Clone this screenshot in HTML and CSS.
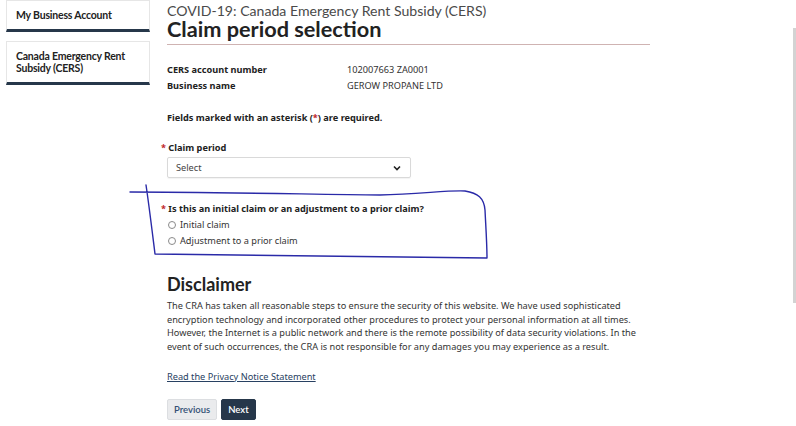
FILE: index.html
```html
<!DOCTYPE html>
<html lang="en">
<head>
<meta charset="utf-8">
<title>Claim period selection</title>
<link rel="stylesheet" href="styles.css">
</head>
<body>
<div class="page">
  <nav class="sidebar">
    <a class="side-item first" href="#">My Business Account</a>
    <a class="side-item" href="#">Canada Emergency Rent Subsidy (CERS)</a>
  </nav>
  <main class="main">
    <header class="head">
      <div class="kicker">COVID-19: Canada Emergency Rent Subsidy (CERS)</div>
      <h1 class="title">Claim period selection</h1>
    </header>
    <dl class="info">
      <dt>CERS account number</dt><dd>102007663 ZA0001</dd>
      <dt>Business name</dt><dd>GEROW PROPANE LTD</dd>
    </dl>
    <p class="req-note">Fields marked with an asterisk (<span class="ast">*</span>) are required.</p>
    <div class="field">
      <label class="label"><span class="ast">*</span> Claim period</label>
      <div class="select"><span>Select</span>
        <svg width="8" height="6" viewBox="0 0 8 6"><path d="M1 1.5 L4 4.5 L7 1.5" fill="none" stroke="#222" stroke-width="1.6"/></svg>
      </div>
    </div>
    <fieldset class="question">
      <legend class="label"><span class="ast">*</span> Is this an initial claim or an adjustment to a prior claim?</legend>
      <label class="radio"><span class="dot"></span>Initial claim</label>
      <label class="radio"><span class="dot"></span>Adjustment to a prior claim</label>
    </fieldset>
    <h2 class="disc-title">Disclaimer</h2>
    <p class="disc">The CRA has taken all reasonable steps to ensure the security of this website. We have used sophisticated encryption technology and incorporated other procedures to protect your personal information at all times. However, the Internet is a public network and there is the remote possibility of data security violations. In the event of such occurrences, the CRA is not responsible for any damages you may experience as a result.</p>
    <p class="privacy"><a href="#">Read the Privacy Notice Statement</a></p>
    <div class="buttons">
      <button class="btn btn-prev">Previous</button>
      <button class="btn btn-next">Next</button>
    </div>
  </main>
</div>
<svg class="scribble" width="796" height="426" viewBox="0 0 796 426">
  <path d="M130 192 C 200 192, 300 194, 380 195 C 420 194, 450 190, 465 191 C 478 193, 484 198, 485 210 C 486 230, 487 245, 487 258 C 420 257, 300 255, 155 254 C 152 230, 149 205, 146 185" fill="none" stroke="#2a2aa8" stroke-width="1.4" stroke-linejoin="round" stroke-linecap="round"/>
</svg>
<div class="scrollbar"></div>
</body>
</html>
```
FILE: styles.css
```css
html, body {
  margin: 0;
  padding: 0;
  background: #fff;
}
body {
  font-family: "Noto Sans", "DejaVu Sans", sans-serif;
  color: #333;
  font-size: 9.2px;
  width: 796px;
  height: 426px;
  overflow: hidden;
  position: relative;
}
.page {
  display: flex;
  align-items: flex-start;
}
.sidebar {
  width: 144px;
  margin-left: 6px;
  display: flex;
  flex-direction: column;
  gap: 9px;
}
.side-item {
  display: block;
  border: 1px solid #e6e6e6;
  border-bottom: 3px solid #26374a;
  padding: 8px 8px 8px 9px;
  font-family: Lato, sans-serif;
  font-weight: 700;
  font-size: 10.5px;
  line-height: 12px;
  color: #222;
  text-decoration: none;
  letter-spacing: -0.2px;
}
.main {
  margin-left: 17px;
  width: 483px;
}
.head {
  border-bottom: 1px solid #cfb3b2;
  padding-bottom: 5px;
}
.kicker {
  font-family: Lato, sans-serif;
  font-size: 14.1px;
  line-height: 15px;
  color: #4a4a4a;
  margin-top: 3px;
}
.title {
  font-family: Lato, sans-serif;
  font-weight: 700;
  font-size: 21.7px;
  line-height: 20px;
  color: #222;
  margin: 1px 0 0;
}
.info {
  display: grid;
  grid-template-columns: 180px 1fr;
  row-gap: 5px;
  margin: 19px 0 0;
  line-height: 11px;
}
.info dt {
  font-weight: 700;
  color: #222;
}
.info dd {
  margin: 0;
  color: #333;
}
.req-note {
  font-weight: 700;
  color: #222;
  margin: 21px 0 0;
  line-height: 11px;
}
.ast {
  color: #c0282d;
}
.field {
  margin-top: 19px;
}
.label {
  display: block;
  font-weight: 700;
  color: #222;
  line-height: 11px;
  margin-left: -6px;
}
.select {
  margin-top: 4px;
  width: 244px;
  height: 21px;
  border: 1px solid #d9d9d9;
  border-radius: 2px;
  box-sizing: border-box;
  display: flex;
  align-items: center;
  justify-content: space-between;
  padding: 0 9px 0 8px;
  color: #444;
  box-shadow: 0 1px 1px rgba(0,0,0,0.05);
}
.question {
  border: 0;
  padding: 0;
  margin: 25px 0 0;
}
.question legend {
  padding: 0;
  margin-bottom: 5px;
}
.radio {
  display: flex;
  align-items: center;
  gap: 4px;
  line-height: 11px;
  color: #333;
  margin-bottom: 5px;
}
.dot {
  width: 6px;
  height: 6px;
  border: 1px solid #8a8a8a;
  border-radius: 50%;
  margin-left: 1px;
}
.disc-title {
  font-family: Lato, sans-serif;
  font-weight: 700;
  font-size: 18px;
  line-height: 20px;
  color: #222;
  margin: 23px 0 0;
}
.disc {
  margin: 5px 0 0;
  line-height: 13.7px;
  color: #333;
  width: 472px;
}
.privacy {
  margin: 17px 0 0;
  line-height: 11px;
}
.privacy a {
  color: #284162;
  text-decoration: underline;
}
.buttons {
  margin-top: 17px;
  display: flex;
  gap: 4px;
}
.btn {
  font-family: Lato, sans-serif;
  font-size: 9.5px;
  font-weight: 600;
  height: 21px;
  padding: 0 6px;
  border-radius: 2px;
  cursor: pointer;
}
.btn-prev {
  background: #eaebed;
  border: 1px solid #dcdee1;
  color: #335075;
}
.btn-next {
  background: #26374a;
  border: 1px solid #26374a;
  color: #fff;
}
.scribble {
  position: absolute;
  left: 0;
  top: 0;
  pointer-events: none;
}
.scrollbar {
  position: absolute;
  right: 0;
  top: 28px;
  width: 3px;
  height: 275px;
  background: #d3d3d3;
}
```
